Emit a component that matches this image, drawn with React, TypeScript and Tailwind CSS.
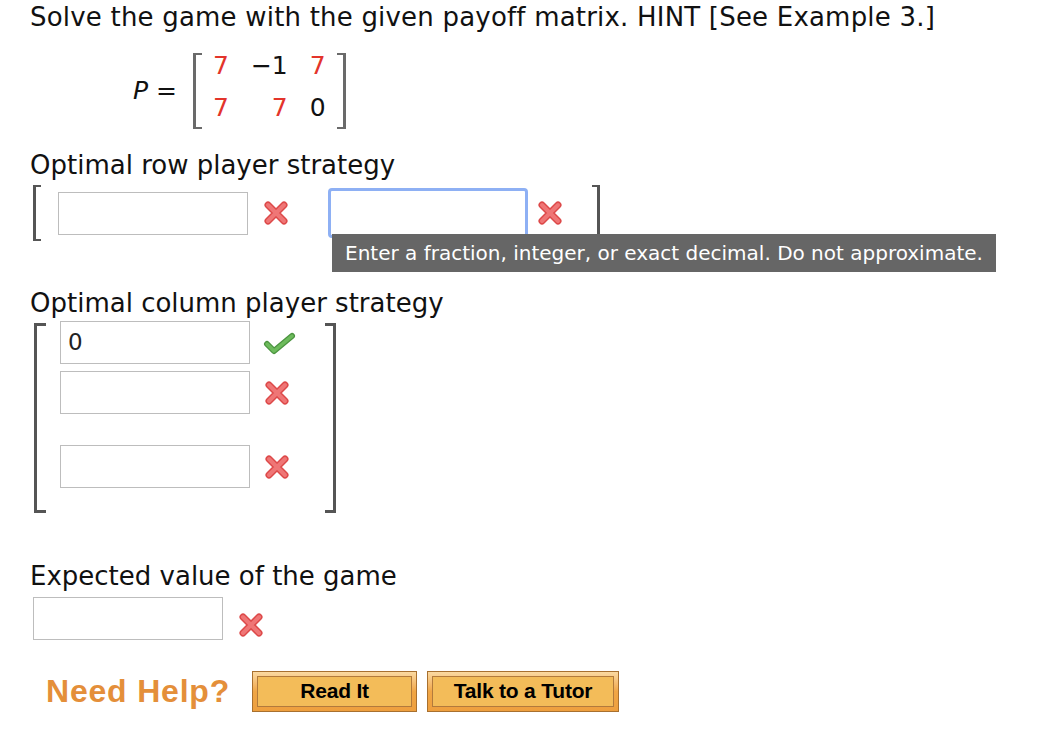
import React from 'react'

const FONT = "font-['DejaVu_Sans',Verdana,sans-serif]"

function XMark() {
  return (
    <svg width="28" height="26" viewBox="0 0 28 26" className="shrink-0">
      <path d="M6 5 L22 21 M22 5 L6 21" stroke="#dd4a4a" strokeWidth="7" strokeLinecap="round" />
      <path d="M6 5 L22 21 M22 5 L6 21" stroke="#ef7676" strokeWidth="4" strokeLinecap="round" />
    </svg>
  )
}

function CheckMark() {
  return (
    <svg width="33" height="24" viewBox="0 0 33 24" className="shrink-0">
      <path d="M4 13 L11 20 L29 5" fill="none" stroke="#4c9440" strokeWidth="6" strokeLinecap="round" strokeLinejoin="round" />
      <path d="M4 13 L11 20 L29 5" fill="none" stroke="#6dbb5c" strokeWidth="3.5" strokeLinecap="round" strokeLinejoin="round" />
    </svg>
  )
}

function Box({ value = '' }: { value?: string }) {
  return (
    <div className="w-[190px] h-[43px] border border-[#bdbdbd] bg-white flex items-center pl-[7px] text-[23px] text-[#222] shrink-0">
      {value}
    </div>
  )
}

function HelpButton({ label, width }: { label: string; width: string }) {
  return (
    <div className={`${width} h-[41px] border border-[#a8702f] bg-gradient-to-b from-[#fbd9a0] via-[#f0a646] to-[#ee9f3e] p-[4px]`}>
      <div className="h-full border border-[#b27a3c] bg-[#f3bc59] flex items-center justify-center font-['Liberation_Sans',Arial,sans-serif] font-bold text-[21px] tracking-[-0.2px] text-black">
        {label}
      </div>
    </div>
  )
}

export default function App() {
  return (
    <div className={`${FONT} w-[1052px] h-[746px] bg-white text-[#111] pl-[30px] relative overflow-hidden`}>
      {/* title */}
      <p className="text-[26px] leading-[34px] tracking-[0.2px]">
        Solve the game with the given payoff matrix. HINT [See Example 3.]
      </p>

      {/* payoff matrix */}
      <div className="flex items-center mt-[19px] ml-[103px]">
        <span className="text-[25px] mr-[16px]"><i>P</i> =</span>
        <div className="flex h-[76px]">
          <div className="w-[9px] border-l-[3px] border-y-2 border-[#6a6a6a]" />
          <div className="grid grid-cols-[auto_auto_auto] gap-x-[22px] px-[11px] text-[25px] leading-[42px] text-right self-start -mt-[8px]">
            <span className="text-[#e3342b]">7</span>
            <span>−1</span>
            <span className="text-[#e3342b]">7</span>
            <span className="text-[#e3342b]">7</span>
            <span className="text-[#e3342b]">7</span>
            <span>0</span>
          </div>
          <div className="w-[9px] border-r-[3px] border-y-2 border-[#6a6a6a]" />
        </div>
      </div>

      {/* row player */}
      <p className="text-[26px] leading-[34px] mt-[19px]">Optimal row player strategy</p>
      <div className="flex items-center mt-[3px] h-[56px] relative">
        <div className="ml-[3px] w-[8px] h-[56px] border-l-[3px] border-y-2 border-[#555]" />
        <div className="ml-[17px]"><Box /></div>
        <div className="ml-[14px]"><XMark /></div>
        <div className="ml-[38px] w-[200px] h-[50px] border-[3px] border-[#8eb0f4] rounded-[4px] bg-white" />
        <div className="ml-[8px]"><XMark /></div>
        <div className="ml-[28px] w-[8px] h-[56px] border-r-[3px] border-y-2 border-[#555]" />
        <div className="absolute left-[302px] top-[49px] w-[664px] h-[38px] bg-[#666666] text-white text-[20px] flex items-center pl-[13px] z-10">
          Enter a fraction, integer, or exact decimal. Do not approximate.
        </div>
      </div>

      {/* column player */}
      <p className="text-[26px] leading-[34px] mt-[45px]">Optimal column player strategy</p>
      <div className="flex items-start mt-[1px]">
        <div className="ml-[4px] mt-[2px] w-[12px] h-[190px] border-l-[3px] border-y-[3px] border-[#555]" />
        <div className="ml-[14px] flex flex-col">
          <div className="flex items-center">
            <Box value="0" />
            <div className="ml-[13px]"><CheckMark /></div>
          </div>
          <div className="flex items-center mt-[7px]">
            <Box />
            <div className="ml-[13px]"><XMark /></div>
          </div>
          <div className="flex items-center mt-[31px]">
            <Box />
            <div className="ml-[13px]"><XMark /></div>
          </div>
        </div>
        <div className="ml-[29px] mt-[2px] w-[11px] h-[190px] border-r-[3px] border-y-[3px] border-[#555]" />
      </div>

      {/* expected value */}
      <p className="text-[26px] leading-[34px] mt-[46px]">Expected value of the game</p>
      <div className="flex items-center mt-[4px] ml-[3px]">
        <Box />
        <div className="ml-[14px] mt-[12px]"><XMark /></div>
      </div>

      {/* help */}
      <div className="flex items-center mt-[27px] ml-[16px]">
        <span className="font-['Liberation_Sans',Arial,sans-serif] font-bold text-[32px] tracking-[0.8px] text-[#e48f3a] mr-[22px]">Need Help?</span>
        <HelpButton label="Read It" width="w-[165px]" />
        <div className="ml-[10px]">
          <HelpButton label="Talk to a Tutor" width="w-[192px]" />
        </div>
      </div>
    </div>
  )
}
